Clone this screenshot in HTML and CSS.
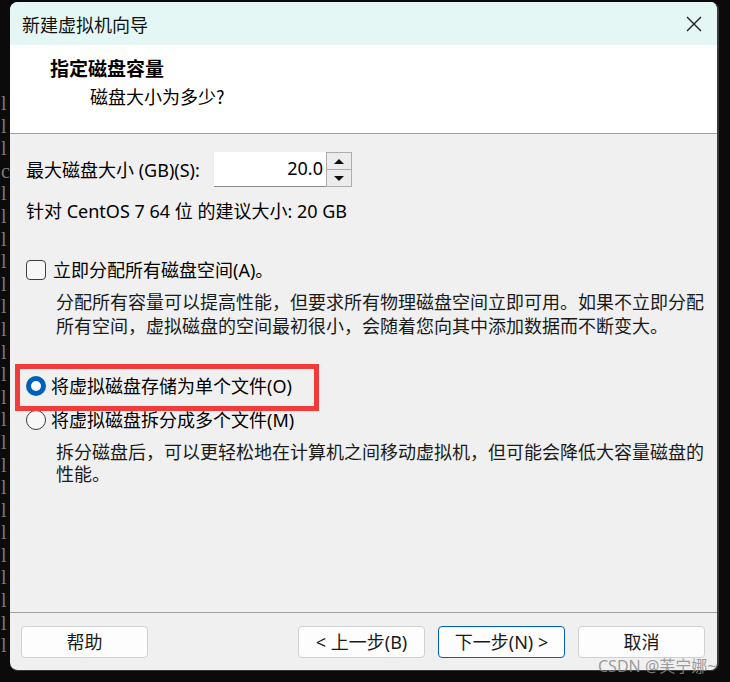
FILE: index.html
```html
<!DOCTYPE html>
<html lang="zh-CN">
<head>
<meta charset="utf-8">
<title>新建虚拟机向导</title>
<link rel="stylesheet" href="styles.css">
</head>
<body>
<div class="strip">l<br>l<br>l<br>c<br>l<br>l<br>l<br>l<br>l<br>l<br>l<br>l<br>l<br>l<br>l<br>l<br>l<br>l<br>l<br>l<br>l<br>l<br>l<br>l<br>l</div>
<div class="window">
  <div class="titlebar">
    <span class="title">新建虚拟机向导</span>
    <svg class="close" width="18" height="18" viewBox="0 0 18 18"><path d="M2 2 L16 16 M16 2 L2 16" stroke="#1b1b1b" stroke-width="1.4" fill="none"/></svg>
  </div>
  <div class="header">
    <div class="h-title">指定磁盘容量</div>
    <div class="h-sub">磁盘大小为多少?</div>
  </div>
  <div class="content">
    <div class="size-row">
      <span class="size-label">最大磁盘大小 (GB)(S):</span>
      <div class="spin">
        <div class="spin-input">20.0</div>
        <div class="spin-btns">
          <div class="spin-btn"><span class="tri-up"></span></div>
          <div class="spin-btn"><span class="tri-down"></span></div>
        </div>
      </div>
    </div>
    <div class="recommend">针对 CentOS 7 64 位 的建议大小: 20 GB</div>
    <div class="check-row">
      <span class="checkbox"></span>
      <span class="opt-label">立即分配所有磁盘空间(A)。</span>
    </div>
    <div class="desc desc1">分配所有容量可以提高性能，但要求所有物理磁盘空间立即可用。如果不立即分配<br>所有空间，虚拟磁盘的空间最初很小，会随着您向其中添加数据而不断变大。</div>
    <div class="radio-row r1">
      <span class="radio checked"></span>
      <span class="opt-label">将虚拟磁盘存储为单个文件(O)</span>
    </div>
    <div class="radio-row r2">
      <span class="radio"></span>
      <span class="opt-label">将虚拟磁盘拆分成多个文件(M)</span>
    </div>
    <div class="desc desc2">拆分磁盘后，可以更轻松地在计算机之间移动虚拟机，但可能会降低大容量磁盘的<br>性能。</div>
  </div>
  <div class="footer">
    <button class="btn">帮助</button>
    <div class="btn-group">
      <button class="btn">&lt; 上一步(B)</button>
      <button class="btn primary">下一步(N) &gt;</button>
      <button class="btn">取消</button>
    </div>
  </div>
  <div class="highlight"></div>
</div>
<div class="watermark">CSDN @芙宁娜~</div>
</body>
</html>
```
FILE: styles.css
```css
* { box-sizing: border-box; }
html, body { margin: 0; padding: 0; }
body {
  width: 730px;
  height: 682px;
  background: #0b0b0b;
  display: flex;
  align-items: flex-start;
  position: relative;
  overflow: hidden;
  font-family: "Noto Sans", "Noto Sans CJK SC", sans-serif;
  color: #000;
}
.strip {
  width: 10px;
  padding-top: 92px;
  padding-left: 1px;
  font-family: "Liberation Serif", serif;
  font-size: 20px;
  line-height: 22.6px;
  color: #7a7a7a;
  overflow: hidden;
  white-space: nowrap;
}
.window {
  margin-top: 2px;
  width: 709px;
  height: 669px;
  background: #f0f0f0;
  border-radius: 8px;
  overflow: hidden;
  display: flex;
  flex-direction: column;
  position: relative;
  border-right: 2px solid #3a3a3a;
  border-bottom: 1px solid #3a3a3a;
}
.titlebar {
  height: 43px;
  background: #e4f7f5;
  display: flex;
  align-items: center;
  justify-content: space-between;
  padding: 0 14px 0 12px;
}
.title {
  font-family: "Noto Sans CJK SC", sans-serif;
  font-size: 18px;
  color: #111;
}
.close { display: block; }
.header {
  background: #fff;
  height: 89px;
  border-bottom: 1px solid #a0a0a0;
  padding: 11px 0 0 40px;
  font-family: "Noto Sans CJK SC", sans-serif;
  font-size: 18px;
  line-height: 24px;
}
.h-title { font-weight: 700; font-size: 19px; }
.h-sub { margin-top: 4px; padding-left: 40px; }
.content {
  flex: 1;
  padding: 18px 0 0 16px;
  font-size: 18px;
}
.size-row {
  display: flex;
  align-items: center;
  height: 35px;
}
.size-label { line-height: 24px; width: 188px; white-space: nowrap; }
.spin {
  display: flex;
}
.spin-input {
  width: 112px;
  height: 35px;
  background: #fff;
  border-bottom: 1px solid #8a8a8a;
  text-align: right;
  padding-right: 3px;
  line-height: 33px;
  font-size: 18px;
}
.spin-btns {
  width: 26px;
  height: 35px;
  border: 1px solid #adadad;
  display: flex;
  flex-direction: column;
  background: #f0f0f0;
}
.spin-btn {
  flex: 1;
  display: flex;
  align-items: center;
  justify-content: center;
  background: #ececec;
}
.spin-btn + .spin-btn { border-top: 1px solid #adadad; }
.tri-up, .tri-down {
  width: 0; height: 0;
  border-left: 5px solid transparent;
  border-right: 5px solid transparent;
}
.tri-up { border-bottom: 5px solid #111; }
.tri-down { border-top: 5px solid #111; }
.recommend {
  margin-top: 12px;
  line-height: 24px;
}
.check-row, .radio-row {
  display: flex;
  align-items: center;
  height: 24px;
  line-height: 24px;
}
.check-row { margin-top: 35px; }
.checkbox {
  width: 20px;
  height: 20px;
  border: 1px solid #3c3c3c;
  border-radius: 4px;
  background: #f7f7f7;
  margin-right: 7px;
}
.desc {
  padding-left: 30px;
  color: #1a1a1a;
  line-height: 24px;
  white-space: nowrap;
}
.desc1 { margin-top: 8px; }
.r1 { margin-top: 36px; }
.r2 { margin-top: 10px; }
.desc2 { margin-top: 9px; line-height: 22px; }
.radio {
  width: 20px;
  height: 20px;
  border-radius: 50%;
  border: 1px solid #3c3c3c;
  background: #f7f7f7;
  margin-right: 5px;
  position: relative;
}
.radio.checked {
  border: none;
  background: #005fb8;
}
.radio.checked::after {
  content: "";
  position: absolute;
  left: 5px; top: 5px;
  width: 10px; height: 10px;
  border-radius: 50%;
  background: #fff;
}
.footer {
  height: 58px;
  border-top: 1px solid #a0a0a0;
  display: flex;
  justify-content: space-between;
  padding: 13px 12px 0 11px;
}
.btn-group { display: flex; gap: 13px; }
.btn {
  width: 127px;
  height: 32px;
  background: #fdfdfd;
  border: 1px solid #d0d0d0;
  border-radius: 4px;
  font-family: "Noto Sans", "Noto Sans CJK SC", sans-serif;
  font-size: 18px;
  color: #1a1a1a;
  padding: 0;
  line-height: 28px;
}
.btn.primary { border-color: #005fb8; }
.highlight {
  position: absolute;
  left: 5px;
  top: 362px;
  width: 304px;
  height: 47px;
  border: 5px solid #f23b3b;
}
.watermark {
  position: absolute;
  left: 598px;
  top: 653px;
  font-family: "Noto Sans", "Noto Sans CJK SC", sans-serif;
  font-size: 16px;
  color: rgba(140, 140, 140, 0.85);
}
```
